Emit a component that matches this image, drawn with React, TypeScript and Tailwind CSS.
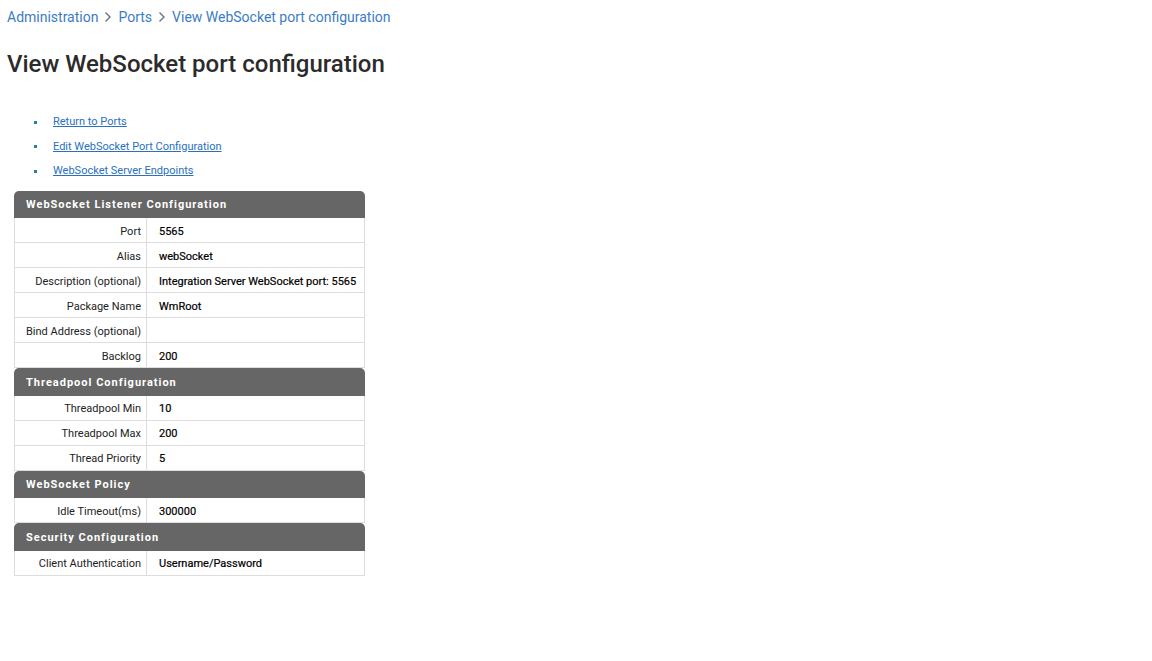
import React from 'react';

type Row = { label: string; value: string };
type Section = { title: string; rows: Row[] };

const sections: Section[] = [
  {
    title: 'WebSocket Listener Configuration',
    rows: [
      { label: 'Port', value: '5565' },
      { label: 'Alias', value: 'webSocket' },
      { label: 'Description (optional)', value: 'Integration Server WebSocket port: 5565' },
      { label: 'Package Name', value: 'WmRoot' },
      { label: 'Bind Address (optional)', value: '' },
      { label: 'Backlog', value: '200' },
    ],
  },
  {
    title: 'Threadpool Configuration',
    rows: [
      { label: 'Threadpool Min', value: '10' },
      { label: 'Threadpool Max', value: '200' },
      { label: 'Thread Priority', value: '5' },
    ],
  },
  {
    title: 'WebSocket Policy',
    rows: [{ label: 'Idle Timeout(ms)', value: '300000' }],
  },
  {
    title: 'Security Configuration',
    rows: [{ label: 'Client Authentication', value: 'Username/Password' }],
  },
];

const links = ['Return to Ports', 'Edit WebSocket Port Configuration', 'WebSocket Server Endpoints'];

const Chevron = () => (
  <svg width="8" height="12" viewBox="0 0 8 12" className="mx-[6px] text-gray-500">
    <path d="M1.5 1.5 L6 6 L1.5 10.5" fill="none" stroke="currentColor" strokeWidth="1.4" />
  </svg>
);

export default function App() {
  return (
    <div className="min-h-screen bg-white font-['Roboto',sans-serif] text-[#333]">
      {/* Breadcrumb */}
      <div className="flex items-center px-[7px] pt-[8px] text-[14px] leading-[18px] text-[#3b7cc7]">
        <span>Administration</span>
        <Chevron />
        <span>Ports</span>
        <Chevron />
        <span>View WebSocket port configuration</span>
      </div>

      {/* Title */}
      <h1 className="px-[7px] pt-[23px] text-[24px] leading-[30px] font-medium text-[#2b2b2b]">
        View WebSocket port configuration
      </h1>

      {/* Links */}
      <ul className="pl-[34px] pt-[36px] flex flex-col gap-[10px]">
        {links.map((l) => (
          <li key={l} className="flex items-center text-[11px] leading-[14.5px]">
            <span className="w-[3px] h-[3px] bg-[#2a7f9e] mr-[16px]" />
            <a href="#" className="text-[#2a70c0] underline">
              {l}
            </a>
          </li>
        ))}
      </ul>

      {/* Config table */}
      <div className="ml-[14px] mt-[12px] w-[351px] flex flex-col text-[11px]">
        {sections.map((s) => (
          <div key={s.title} className="flex flex-col">
            <div className="h-[27.5px] flex items-center bg-[#666666] rounded-t-[5px] px-[12px] pt-[2px] text-white font-bold tracking-[1px]">
              {s.title}
            </div>
            {s.rows.map((r) => (
              <div key={r.label} className="h-[25px] flex border-x border-b border-[#dddddd]">
                <div className="w-[132px] shrink-0 border-r border-[#dddddd] flex items-center justify-end pr-[5px] pt-[4px] text-[#222]">
                  {r.label}
                </div>
                <div className="flex-1 flex items-center pl-[12px] pt-[4px] text-black [-webkit-text-stroke:0.2px_black]">
                  {r.value}
                </div>
              </div>
            ))}
          </div>
        ))}
      </div>
    </div>
  );
}
